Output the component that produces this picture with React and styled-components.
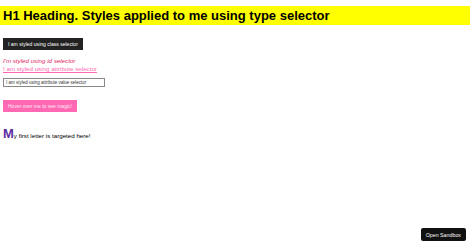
import React from "react";
import styled, { createGlobalStyle } from "styled-components";

const GlobalStyle = createGlobalStyle`
  html, body {
    margin: 0;
    padding: 0;
    background: #ffffff;
  }
  body {
    font-family: "Liberation Sans", Arial, sans-serif;
    color: #000000;
  }
`;

const Page = styled.div`
  position: relative;
  width: 474px;
  height: 248px;
  padding: 6px 4px 0 3px;
  box-sizing: border-box;
  overflow: hidden;
`;

const Heading = styled.h1`
  margin: 0 0 13px -3px;
  padding: 1px 0 1px 3px;
  background: #ffff00;
  font-size: 13px;
  font-weight: bold;
  line-height: 17px;
`;

const Stack = styled.div`
  display: flex;
  flex-direction: column;
  align-items: flex-start;
`;

const ClassButton = styled.button`
  border: none;
  margin: 0 0 7px;
  padding: 0 5px;
  height: 12px;
  background: #222222;
  color: #ffffff;
  font-family: "Liberation Sans", Arial, sans-serif;
  font-size: 5.05px;
`;

const IdText = styled.p`
  margin: 0;
  color: #e0245e;
  font-style: italic;
  font-size: 6.2px;
  line-height: 8px;
`;

const AttrLink = styled.a`
  color: #ff69b4;
  font-size: 6.2px;
  line-height: 8px;
  text-decoration: underline;
`;

const AttrInput = styled.input`
  margin: 5px 0 13px;
  padding: 0 2px;
  width: 102px;
  height: 9px;
  box-sizing: border-box;
  border: 1px solid #888888;
  font-family: "Liberation Sans", Arial, sans-serif;
  font-size: 4.5px;
  color: #333333;
`;

const MagicButton = styled.button`
  border: none;
  margin: 0 0 14px;
  padding: 0 5px;
  height: 12px;
  background: #ff69b4;
  color: #ffe6f2;
  font-family: "Liberation Sans", Arial, sans-serif;
  font-size: 5px;

  &:hover {
    background: #ff1493;
  }
`;

const FirstLetter = styled.p`
  margin: 0;
  color: #000000;
  font-size: 6.2px;
  &::first-letter {
    color: #5b2ca0;
    font-size: 13px;
    font-weight: bold;
  }
`;

const SandboxButton = styled.button`
  position: absolute;
  right: 8px;
  bottom: 7px;
  border: none;
  padding: 0 5px;
  height: 13px;
  background: #111111;
  color: #ffffff;
  border-radius: 2px;
  font-family: "Liberation Sans", Arial, sans-serif;
  font-size: 5.3px;
`;

export default function App() {
  return (
    <>
      <GlobalStyle />
      <Page>
        <Heading>H1 Heading. Styles applied to me using type selector</Heading>
        <Stack>
          <ClassButton>I am styled using class selector</ClassButton>
          <IdText>I'm styled using id selector</IdText>
          <AttrLink href="#" target="_blank">
            I am styled using attribute selector
          </AttrLink>
          <AttrInput
            type="text"
            defaultValue="I am styled using attribute value selector"
          />
          <MagicButton>Hover over me to see magic!</MagicButton>
          <FirstLetter>My first letter is targeted here!</FirstLetter>
        </Stack>
        <SandboxButton>Open Sandbox</SandboxButton>
      </Page>
    </>
  );
}
